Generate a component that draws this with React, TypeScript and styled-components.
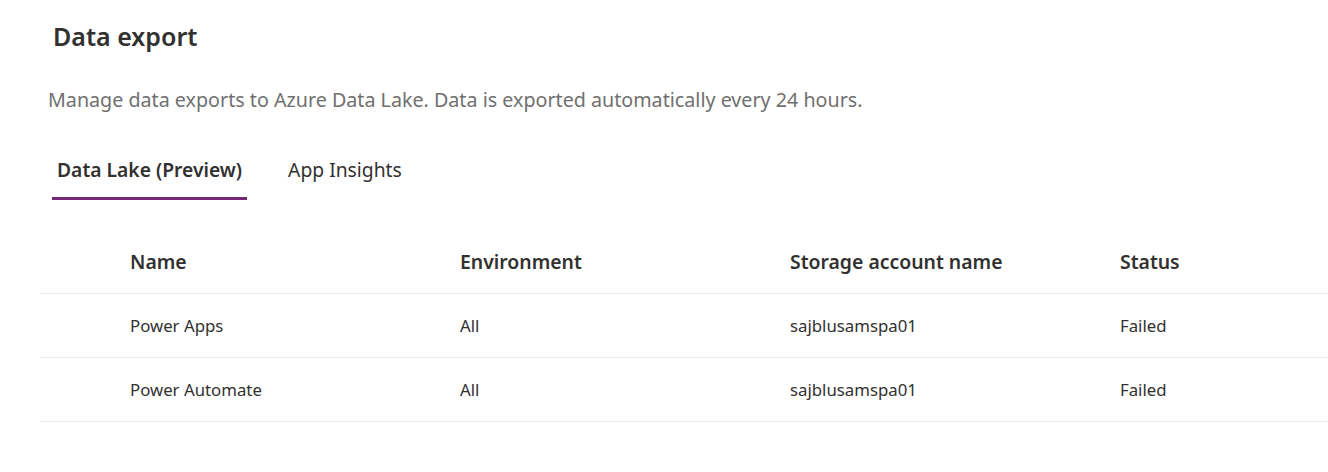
import { createGlobalStyle } from 'styled-components';
import styled from 'styled-components';

const GlobalStyle = createGlobalStyle`
    body {
        margin: 0;
        background: #ffffff;
        font-family: 'Noto Sans', 'Open Sans', sans-serif;
        color: #323130;
    }
`;

const Page = styled.div`
    padding: 16px 0 0 40px;
`;

const Title = styled.h1`
    margin: 0 0 0 13px;
    font-size: 25px;
    font-weight: 600;
    line-height: 40px;
    color: #323130;
`;

const Description = styled.p`
    margin: 31px 0 0 8px;
    font-size: 19.7px;
    line-height: 26px;
    color: #707070;
`;

const TabList = styled.div`
    display: flex;
    gap: 36px;
    margin: 33px 0 0 12px;
`;

const Tab = styled.button<{ $active?: boolean }>`
    position: relative;
    padding: 10px 5px 17px;
    border: none;
    background: none;
    font-family: inherit;
    font-size: 19.3px;
    font-weight: ${(p) => (p.$active ? 600 : 400)};
    color: #323130;
    cursor: pointer;

    &::after {
        content: '';
        position: absolute;
        left: 0;
        right: 0;
        bottom: 0;
        height: 3px;
        background: ${(p) => (p.$active ? '#742774' : 'transparent')};
    }
`;

const Table = styled.div`
    margin-top: 30px;
`;

const Row = styled.div<{ $header?: boolean }>`
    box-sizing: border-box;
    display: grid;
    grid-template-columns: 90px 330px 330px 330px 1fr;
    align-items: center;
    height: 64px;
    border-bottom: 1px solid #edebe9;
    font-size: ${(p) => (p.$header ? '19.4px' : '16.8px')};
    font-weight: ${(p) => (p.$header ? 600 : 400)};
    color: #323130;
`;

const rows = [
    { name: 'Power Apps', env: 'All', storage: 'sajblusamspa01', status: 'Failed' },
    { name: 'Power Automate', env: 'All', storage: 'sajblusamspa01', status: 'Failed' },
];

export default function App() {
    return (
        <>
            <GlobalStyle />
            <Page>
                <Title>Data export</Title>
                <Description>
                    Manage data exports to Azure Data Lake. Data is exported automatically every 24 hours.
                </Description>
                <TabList>
                    <Tab $active>Data Lake (Preview)</Tab>
                    <Tab>App Insights</Tab>
                </TabList>
                <Table>
                    <Row $header>
                        <span />
                        <span>Name</span>
                        <span>Environment</span>
                        <span>Storage account name</span>
                        <span>Status</span>
                    </Row>
                    {rows.map((r) => (
                        <Row key={r.name}>
                            <span />
                            <span>{r.name}</span>
                            <span>{r.env}</span>
                            <span>{r.storage}</span>
                            <span>{r.status}</span>
                        </Row>
                    ))}
                </Table>
            </Page>
        </>
    );
}
